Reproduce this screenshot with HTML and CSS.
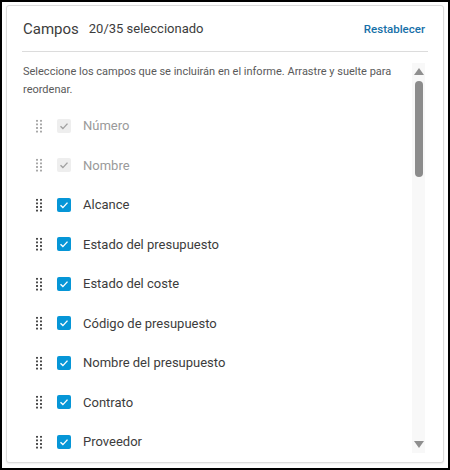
FILE: index.html
```html
<!DOCTYPE html>
<html lang="es">
<head>
    <meta charset="UTF-8">
    <meta name="viewport" content="width=device-width, initial-scale=1.0">
    <title>Campos</title>
    <link rel="stylesheet" href="styles.css">
</head>
<body>
    <div class="panel">
        <div class="panel-header">
            <span class="panel-title">Campos</span>
            <span class="panel-count">20/35 seleccionado</span>
            <a class="reset-link" href="#">Restablecer</a>
        </div>

        <div class="panel-body">
            <div class="field-scroll">
                <p class="hint">Seleccione los campos que se incluirán en el informe. Arrastre y suelte para reordenar.</p>

                <ul class="field-list">
                    <li class="field disabled"><span class="grip"></span><span class="check"><svg viewBox="0 0 14 14"><path d="M3.5 7.2l2.4 2.4 4.6-5"/></svg></span><span class="label">Número</span></li>
                    <li class="field disabled"><span class="grip"></span><span class="check"><svg viewBox="0 0 14 14"><path d="M3.5 7.2l2.4 2.4 4.6-5"/></svg></span><span class="label">Nombre</span></li>
                    <li class="field"><span class="grip"></span><span class="check"><svg viewBox="0 0 14 14"><path d="M3.5 7.2l2.4 2.4 4.6-5"/></svg></span><span class="label">Alcance</span></li>
                    <li class="field"><span class="grip"></span><span class="check"><svg viewBox="0 0 14 14"><path d="M3.5 7.2l2.4 2.4 4.6-5"/></svg></span><span class="label">Estado del presupuesto</span></li>
                    <li class="field"><span class="grip"></span><span class="check"><svg viewBox="0 0 14 14"><path d="M3.5 7.2l2.4 2.4 4.6-5"/></svg></span><span class="label">Estado del coste</span></li>
                    <li class="field"><span class="grip"></span><span class="check"><svg viewBox="0 0 14 14"><path d="M3.5 7.2l2.4 2.4 4.6-5"/></svg></span><span class="label">Código de presupuesto</span></li>
                    <li class="field"><span class="grip"></span><span class="check"><svg viewBox="0 0 14 14"><path d="M3.5 7.2l2.4 2.4 4.6-5"/></svg></span><span class="label">Nombre del presupuesto</span></li>
                    <li class="field"><span class="grip"></span><span class="check"><svg viewBox="0 0 14 14"><path d="M3.5 7.2l2.4 2.4 4.6-5"/></svg></span><span class="label">Contrato</span></li>
                    <li class="field"><span class="grip"></span><span class="check"><svg viewBox="0 0 14 14"><path d="M3.5 7.2l2.4 2.4 4.6-5"/></svg></span><span class="label">Proveedor</span></li>
                </ul>
            </div>

            <div class="scrollbar">
                <span class="arrow up"></span>
                <span class="thumb"></span>
                <span class="arrow down"></span>
            </div>
        </div>
    </div>
</body>
</html>
```

FILE: styles.css
```css
* {
    box-sizing: border-box;
}
html, body {
    margin: 0;
    height: 100%;
}
body {
    border: 2px solid #000;
    background-color: #fff;
    padding: 3px 4px 5px 4px;
    font-family: Roboto, "Noto Sans", sans-serif;
    color: #3c3c3c;
    overflow: hidden;
}
.panel {
    height: 100%;
    display: flex;
    flex-direction: column;
    background-color: #fff;
    border: 1px solid #dcdcdc;
    border-radius: 3px;
    box-shadow: 0 1px 2px rgba(0,0,0,0.08);
    padding: 0 15px;
}
.panel-header {
    height: 46px;
    flex: none;
    display: flex;
    align-items: center;
    border-bottom: 1px solid #dcdcdc;
    padding: 0 1px;
}
.panel-title {
    font-size: 15px;
    margin-right: 10px;
}
.panel-count {
    font-size: 13px;
}
.reset-link {
    margin-left: auto;
    margin-right: 2px;
    font-size: 11.5px;
    font-weight: 500;
    color: #1670a8;
    text-decoration: none;
}
.panel-body {
    flex: 1;
    min-height: 0;
    display: flex;
    padding-top: 11px;
    padding-bottom: 9px;
}
.field-scroll {
    flex: 1;
    overflow: hidden;
    padding-left: 1px;
}
.hint {
    margin: 0 0 8px 0;
    font-size: 11px;
    line-height: 17.5px;
    color: #5a5a5a;
}
.field-list {
    list-style: none;
    margin: 0;
    padding: 0;
}
.field {
    height: 39.5px;
    display: flex;
    align-items: center;
    font-size: 13px;
}
.grip {
    width: 6px;
    height: 14px;
    margin-left: 13px;
    margin-right: 15px;
    background-image: radial-gradient(circle, #4a4a4a 0.9px, transparent 1.1px);
    background-size: 4px 3.6px;
    background-position: -1px 0;
}
.check {
    width: 14px;
    height: 14px;
    border-radius: 2px;
    background-color: #0696d7;
    display: flex;
    margin-right: 12px;
}
.check svg {
    width: 14px;
    height: 14px;
    fill: none;
    stroke: #fff;
    stroke-width: 1.4;
}
.label {
    white-space: nowrap;
}
.disabled .grip {
    background-image: radial-gradient(circle, #a8a8a8 0.9px, transparent 1.1px);
}
.disabled .check {
    background-color: #eeeeee;
}
.disabled .check svg {
    stroke: #a0a0a0;
}
.disabled .label {
    color: #9a9a9a;
}
.scrollbar {
    width: 13px;
    flex: none;
    margin-right: 3px;
    background-color: #f8f8f8;
    display: flex;
    flex-direction: column;
    align-items: center;
    padding: 5px 0;
}
.arrow {
    width: 0;
    height: 0;
    border-left: 5px solid transparent;
    border-right: 5px solid transparent;
}
.arrow.up {
    border-bottom: 7px solid #8f8f8f;
}
.arrow.down {
    margin-top: auto;
    border-top: 7px solid #8f8f8f;
}
.thumb {
    width: 8px;
    height: 96px;
    margin-top: 6px;
    border-radius: 4px;
    background-color: #8c8c8c;
}
```
